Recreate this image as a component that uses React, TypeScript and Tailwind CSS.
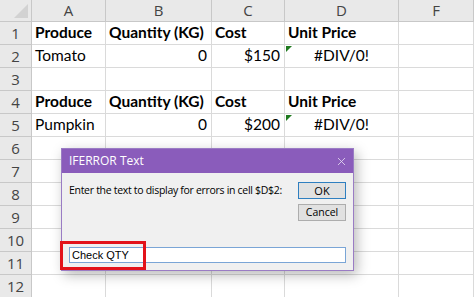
import { X } from 'lucide-react';

const cols = ['A', 'B', 'C', 'D', 'F'];

type Cell = { text?: string; bold?: boolean; align?: 'left' | 'right' | 'center'; flag?: boolean };

const header: Cell[] = [
  { text: 'Produce', bold: true },
  { text: 'Quantity (KG)', bold: true },
  { text: 'Cost', bold: true },
  { text: 'Unit Price', bold: true },
  {},
];

const rowFor = (name: string, cost: string): Cell[] => [
  { text: name },
  { text: '0', align: 'right' },
  { text: cost, align: 'right' },
  { text: '#DIV/0!', align: 'center', flag: true },
  {},
];

const blank: Cell[] = [{}, {}, {}, {}, {}];

const rows: Cell[][] = [
  header,
  rowFor('Tomato', '$150'),
  blank,
  header,
  rowFor('Pumpkin', '$200'),
  blank,
  blank,
  blank,
  blank,
  blank,
  blank,
  blank,
];

function SheetCell({ cell }: { cell: Cell }) {
  const align =
    cell.align === 'right' ? 'justify-end pr-[4px]' : cell.align === 'center' ? 'justify-center' : 'justify-start pl-[3px]';
  return (
    <div
      className={`relative flex h-[23px] items-center border-b border-r border-[#dadada] bg-white text-[15.5px] text-black ${align} ${
        cell.bold ? 'font-bold' : ''
      }`}
    >
      {cell.flag && (
        <svg className="absolute left-[1px] top-[1px]" width="6" height="6" viewBox="0 0 6 6">
          <polygon points="0,0 6,0 0,6" fill="#1f7a1f" />
        </svg>
      )}
      {cell.text}
    </div>
  );
}

export default function App() {
  return (
    <div className="relative h-[297px] w-[474px] overflow-hidden bg-white font-['Lato',sans-serif]">
      {/* Sheet grid */}
      <div className="grid grid-cols-[32px_74px_106px_73px_114px_75px]">
        {/* Select-all corner */}
        <div className="relative h-[22px] border-b border-r border-[#c8c8c8] bg-[#e9e9e9]">
          <svg className="absolute bottom-[3px] right-[3px]" width="14" height="14" viewBox="0 0 14 14">
            <polygon points="14,0 14,14 0,14" fill="#d2d2d2" />
          </svg>
        </div>
        {cols.map((c) => (
          <div
            key={c}
            className="flex h-[22px] items-center justify-center border-b border-r border-[#c8c8c8] bg-[#e9e9e9] font-['Open_Sans',sans-serif] text-[15px] text-[#444]"
          >
            {c}
          </div>
        ))}

        {rows.map((row, i) => (
          <div key={i} className="contents">
            <div className="flex h-[23px] items-center justify-center border-b border-r border-[#c8c8c8] bg-[#e9e9e9] font-['Open_Sans',sans-serif] text-[15px] text-[#444]">
              {i + 1}
            </div>
            {row.map((cell, j) => (
              <SheetCell key={j} cell={cell} />
            ))}
          </div>
        ))}
      </div>

      {/* IFERROR dialog */}
      <div className="absolute left-[61px] top-[148px] flex h-[123px] w-[293px] flex-col border border-[#9a7cc4] bg-[#f0f0f0] font-['Open_Sans',sans-serif] shadow-[3px_4px_12px_rgba(0,0,0,0.28)]">
        <div className="flex h-[24px] shrink-0 items-center justify-between bg-[#8a5cbb] pl-[7px] pr-[5px] text-[12px] text-white">
          <span>IFERROR Text</span>
          <X className="h-[13px] w-[13px] text-[#e8dcf4]" strokeWidth={1.5} />
        </div>
        <div className="flex flex-1 flex-col px-[7px] pb-[7px] pt-[9px]">
          <div className="flex justify-between">
            <p className="whitespace-nowrap pt-[1px] text-[10.5px] leading-[15px] tracking-[-0.3px] text-black">
              Enter the text to display for errors in cell $D$2:
            </p>
            <div className="flex w-[48px] flex-col gap-[5px]">
              <button className="h-[17px] border border-[#2f7fc0] bg-[#e1e1e1] text-[11px] leading-none text-black">
                OK
              </button>
              <button className="h-[17px] border border-[#adadad] bg-[#e1e1e1] text-[10.5px] leading-none text-black">
                Cancel
              </button>
            </div>
          </div>
          <div className="mt-auto flex h-[16px] items-center border border-[#7aa5d6] bg-white pl-[2px] font-['Liberation_Sans',sans-serif] text-[11px] text-black">
            Check QTY
          </div>
        </div>
      </div>

      {/* Highlight box */}
      <div className="absolute left-[60px] top-[241px] h-[29px] w-[86px] border-[3px] border-[#e3131b]" />
    </div>
  );
}
